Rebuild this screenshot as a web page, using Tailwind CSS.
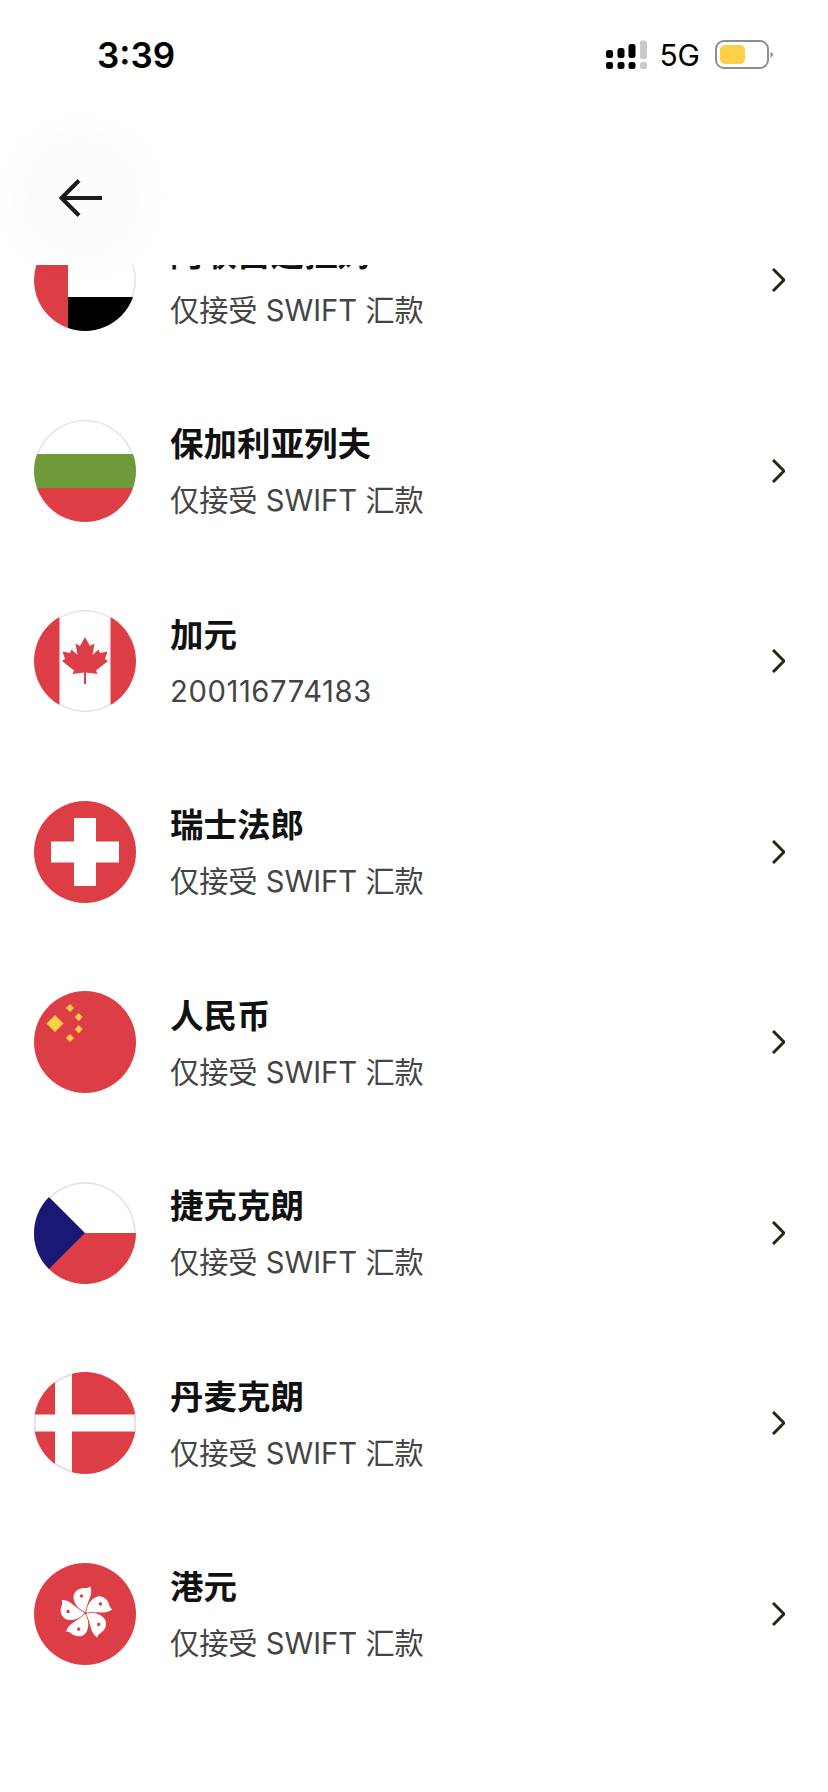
<!DOCTYPE html>
<html lang="zh-CN">
<head>
    <meta charset="UTF-8">
    <meta name="viewport" content="width=device-width, initial-scale=1.0">
    <title>收款账户</title>
    <script src="https://cdn.jsdelivr.net/npm/@tailwindcss/browser@4"></script>
</head>
<body class="bg-white font-['Inter','Noto_Sans_CJK_SC',sans-serif]">
<div class="relative w-[828px] h-[1792px] overflow-hidden bg-white">

    <!-- Status bar -->
    <div class="flex items-center justify-between h-[110px] pl-[97px] pr-[53px]">
        <span class="text-[35px] leading-none font-semibold text-black">3:39</span>
        <div class="flex items-center">
            <svg width="42" height="30" viewBox="0 0 42 30">
                <rect x="0" y="10" width="7" height="8" rx="2.5" fill="#000"/>
                <rect x="11.5" y="8" width="7" height="10" rx="2.5" fill="#000"/>
                <rect x="22.5" y="4" width="7" height="14" rx="2.5" fill="#000"/>
                <rect x="34" y="0.5" width="7" height="18.5" rx="2.5" fill="#c9c9c9"/>
                <rect x="0" y="22" width="7" height="7" rx="2.5" fill="#000"/>
                <rect x="11.5" y="22" width="7" height="7" rx="2.5" fill="#000"/>
                <rect x="22.5" y="22" width="7" height="7" rx="2.5" fill="#000"/>
                <rect x="34" y="22" width="7" height="7" rx="2.5" fill="#c9c9c9"/>
            </svg>
            <span class="ml-[11px] text-[30px] leading-none text-black">5G</span>
            <svg class="ml-[15px]" width="60" height="30" viewBox="0 0 60 30">
                <rect x="1" y="1" width="52" height="27" rx="8" fill="#fff" stroke="#8e8e8e" stroke-width="2"/>
                <rect x="5" y="5" width="25" height="19" rx="5" fill="#f9d046"/>
                <path d="M55.5 11.5 L58.5 14.5 L55.5 18 Z" fill="#8e8e8e"/>
            </svg>
        </div>
    </div>

    <div class="h-[155px]"></div>

    <!-- Back button -->
    <div class="absolute z-10 left-[34px] top-[151px] flex items-center justify-center w-[93px] h-[93px] rounded-full bg-[#fcfcfc] shadow-[0_0_60px_rgba(0,0,0,0.05)]">
        <svg width="46" height="40" viewBox="0 0 46 40" fill="none" stroke="#1c1c1c" stroke-width="4">
            <path d="M44 20 H4"/>
            <path d="M21 2.5 L3.5 20 L21 37.5"/>
        </svg>
    </div>

    <!-- Account list, scrolled so the first row is cut off -->
    <div class="h-[1527px] overflow-hidden">
        <div class="-mt-[80px]">

            <div class="flex items-center h-[190.5px] pl-[34px] pr-[43px]">
                <svg class="shrink-0 rounded-full" width="102" height="102" viewBox="0 0 102 102">
                    <rect width="102" height="102" fill="#fff"/>
                    <rect x="34" y="68" width="68" height="34" fill="#000"/>
                    <rect width="34" height="102" fill="#dd3d45"/>
                    <path d="M34 3.7 A50.1 50.1 0 0 1 98.3 68" fill="none" stroke="#e3e3e3" stroke-width="1.8"/>
                </svg>
                <div class="ml-[34px] flex-1 pt-[2px]">
                    <p class="text-[33.5px] leading-[44px] font-bold text-[#111]">阿联酋迪拉姆</p>
                    <p class="mt-[15px] text-[29.2px] leading-[40px] text-[#444]">仅接受 SWIFT 汇款</p>
                </div>
                <svg width="13" height="24" viewBox="0 0 13 24" fill="none" stroke="#1f2a10" stroke-width="3"><path d="M1 1 L12 12 L1 23"/></svg>
            </div>

            <div class="flex items-center h-[190.5px] pl-[34px] pr-[43px]">
                <svg class="shrink-0 rounded-full" width="102" height="102" viewBox="0 0 102 102">
                    <rect width="102" height="34" fill="#fff"/>
                    <rect y="34" width="102" height="34" fill="#6f9a3a"/>
                    <rect y="68" width="102" height="34" fill="#dd3d45"/>
                    <path d="M3.7 34 A50.1 50.1 0 0 1 98.3 34" fill="none" stroke="#e3e3e3" stroke-width="1.8"/>
                </svg>
                <div class="ml-[34px] flex-1 pt-[2px]">
                    <p class="text-[33.5px] leading-[44px] font-bold text-[#111]">保加利亚列夫</p>
                    <p class="mt-[15px] text-[29.2px] leading-[40px] text-[#444]">仅接受 SWIFT 汇款</p>
                </div>
                <svg width="13" height="24" viewBox="0 0 13 24" fill="none" stroke="#1f2a10" stroke-width="3"><path d="M1 1 L12 12 L1 23"/></svg>
            </div>

            <div class="flex items-center h-[190.5px] pl-[34px] pr-[43px]">
                <svg class="shrink-0 rounded-full" width="102" height="102" viewBox="0 0 102 102">
                    <rect width="102" height="102" fill="#fff"/>
                    <rect width="25.5" height="102" fill="#dd3d45"/>
                    <rect x="76.5" width="25.5" height="102" fill="#dd3d45"/>
                    <path d="M51 27 L56 36 L60.5 33.5 L58.5 45 L64.5 39.5 L66 43 L73.5 41.5 L71 49 L74 51 L62 60.5 L63.5 64 L52 62.5 V74 H50 V62.5 L38.5 64 L40 60.5 L28 51 L31 49 L28.5 41.5 L36 43 L37.5 39.5 L43.5 45 L41.5 33.5 L46 36 Z" fill="#dd3d45"/>
                    <path d="M25.5 7.7 A50.1 50.1 0 0 1 76.5 7.7 M25.5 94.3 A50.1 50.1 0 0 0 76.5 94.3" fill="none" stroke="#e3e3e3" stroke-width="1.8"/>
                </svg>
                <div class="ml-[34px] flex-1 pt-[2px]">
                    <p class="text-[33.5px] leading-[44px] font-bold text-[#111]">加元</p>
                    <p class="mt-[15px] text-[29.2px] leading-[40px] tracking-[0.6px] text-[#444]">200116774183</p>
                </div>
                <svg width="13" height="24" viewBox="0 0 13 24" fill="none" stroke="#1f2a10" stroke-width="3"><path d="M1 1 L12 12 L1 23"/></svg>
            </div>

            <div class="flex items-center h-[190.5px] pl-[34px] pr-[43px]">
                <svg class="shrink-0 rounded-full" width="102" height="102" viewBox="0 0 102 102">
                    <rect width="102" height="102" fill="#dd3d45"/>
                    <path d="M40 17 H62 V40.5 H85 V61.5 H62 V85 H40 V61.5 H17 V40.5 H40 Z" fill="#fff"/>
                </svg>
                <div class="ml-[34px] flex-1 pt-[2px]">
                    <p class="text-[33.5px] leading-[44px] font-bold text-[#111]">瑞士法郎</p>
                    <p class="mt-[15px] text-[29.2px] leading-[40px] text-[#444]">仅接受 SWIFT 汇款</p>
                </div>
                <svg width="13" height="24" viewBox="0 0 13 24" fill="none" stroke="#1f2a10" stroke-width="3"><path d="M1 1 L12 12 L1 23"/></svg>
            </div>

            <div class="flex items-center h-[190.5px] pl-[34px] pr-[43px]">
                <svg class="shrink-0 rounded-full" width="102" height="102" viewBox="0 0 102 102">
                    <rect width="102" height="102" fill="#dd3d45"/>
                    <path d="M21 24 L29.5 32.5 L21 41 L12.5 32.5 Z M36 13 L40 17 L36 21 L32 17 Z M44.7 22 L48.7 26 L44.7 30 L40.7 26 Z M44.7 34.3 L48.7 38.3 L44.7 42.3 L40.7 38.3 Z M36 43 L40 47 L36 51 L32 47 Z" fill="#f9d046"/>
                </svg>
                <div class="ml-[34px] flex-1 pt-[2px]">
                    <p class="text-[33.5px] leading-[44px] font-bold text-[#111]">人民币</p>
                    <p class="mt-[15px] text-[29.2px] leading-[40px] text-[#444]">仅接受 SWIFT 汇款</p>
                </div>
                <svg width="13" height="24" viewBox="0 0 13 24" fill="none" stroke="#1f2a10" stroke-width="3"><path d="M1 1 L12 12 L1 23"/></svg>
            </div>

            <div class="flex items-center h-[190.5px] pl-[34px] pr-[43px]">
                <svg class="shrink-0 rounded-full" width="102" height="102" viewBox="0 0 102 102">
                    <rect width="102" height="51" fill="#fff"/>
                    <rect y="51" width="102" height="51" fill="#dd3d45"/>
                    <path d="M0 0 L51 51 L0 102 Z" fill="#1a1875"/>
                    <path d="M15.6 15.6 A50.1 50.1 0 0 1 101.1 51" fill="none" stroke="#e3e3e3" stroke-width="1.8"/>
                </svg>
                <div class="ml-[34px] flex-1 pt-[2px]">
                    <p class="text-[33.5px] leading-[44px] font-bold text-[#111]">捷克克朗</p>
                    <p class="mt-[15px] text-[29.2px] leading-[40px] text-[#444]">仅接受 SWIFT 汇款</p>
                </div>
                <svg width="13" height="24" viewBox="0 0 13 24" fill="none" stroke="#1f2a10" stroke-width="3"><path d="M1 1 L12 12 L1 23"/></svg>
            </div>

            <div class="flex items-center h-[190.5px] pl-[34px] pr-[43px]">
                <svg class="shrink-0 rounded-full" width="102" height="102" viewBox="0 0 102 102">
                    <rect width="102" height="102" fill="#dd3d45"/>
                    <rect x="21" width="17" height="102" fill="#fff"/>
                    <rect y="42.5" width="102" height="17" fill="#fff"/>
                    <path d="M21 10.9 A50.1 50.1 0 0 1 38 2.6 M21 91.1 A50.1 50.1 0 0 0 38 99.4 M1.6 42.5 A50.1 50.1 0 0 0 1.6 59.5 M100.4 42.5 A50.1 50.1 0 0 1 100.4 59.5" fill="none" stroke="#e3e3e3" stroke-width="1.8"/>
                </svg>
                <div class="ml-[34px] flex-1 pt-[2px]">
                    <p class="text-[33.5px] leading-[44px] font-bold text-[#111]">丹麦克朗</p>
                    <p class="mt-[15px] text-[29.2px] leading-[40px] text-[#444]">仅接受 SWIFT 汇款</p>
                </div>
                <svg width="13" height="24" viewBox="0 0 13 24" fill="none" stroke="#1f2a10" stroke-width="3"><path d="M1 1 L12 12 L1 23"/></svg>
            </div>

            <div class="flex items-center h-[190.5px] pl-[34px] pr-[43px]">
                <svg class="shrink-0 rounded-full" width="102" height="102" viewBox="0 0 102 102">
                    <rect width="102" height="102" fill="#dd3d45"/>
                    <g transform="translate(51.5 50)">
                        <defs>
                            <path id="petal" d="M0 -1 C-6 -3 -12 -9 -12 -16 C-12 -21.5 -6 -25.5 -1 -25 C0.5 -24.7 2.5 -25 5 -26.5 C6 -22.5 6 -19 4.5 -15.5 C3 -11.5 1 -7 0 -1 Z" fill="#fff"/>
                        </defs>
                        <use href="#petal"/>
                        <use href="#petal" transform="rotate(72)"/>
                        <use href="#petal" transform="rotate(144)"/>
                        <use href="#petal" transform="rotate(216)"/>
                        <use href="#petal" transform="rotate(288)"/>
                        <circle cx="-4" cy="-17" r="1.7" fill="#dd3d45"/>
                        <circle cx="-4" cy="-17" r="1.7" fill="#dd3d45" transform="rotate(72)"/>
                        <circle cx="-4" cy="-17" r="1.7" fill="#dd3d45" transform="rotate(144)"/>
                        <circle cx="-4" cy="-17" r="1.7" fill="#dd3d45" transform="rotate(216)"/>
                        <circle cx="-4" cy="-17" r="1.7" fill="#dd3d45" transform="rotate(288)"/>
                    </g>
                </svg>
                <div class="ml-[34px] flex-1 pt-[2px]">
                    <p class="text-[33.5px] leading-[44px] font-bold text-[#111]">港元</p>
                    <p class="mt-[15px] text-[29.2px] leading-[40px] text-[#444]">仅接受 SWIFT 汇款</p>
                </div>
                <svg width="13" height="24" viewBox="0 0 13 24" fill="none" stroke="#1f2a10" stroke-width="3"><path d="M1 1 L12 12 L1 23"/></svg>
            </div>

        </div>
    </div>
</div>
</body>
</html>
